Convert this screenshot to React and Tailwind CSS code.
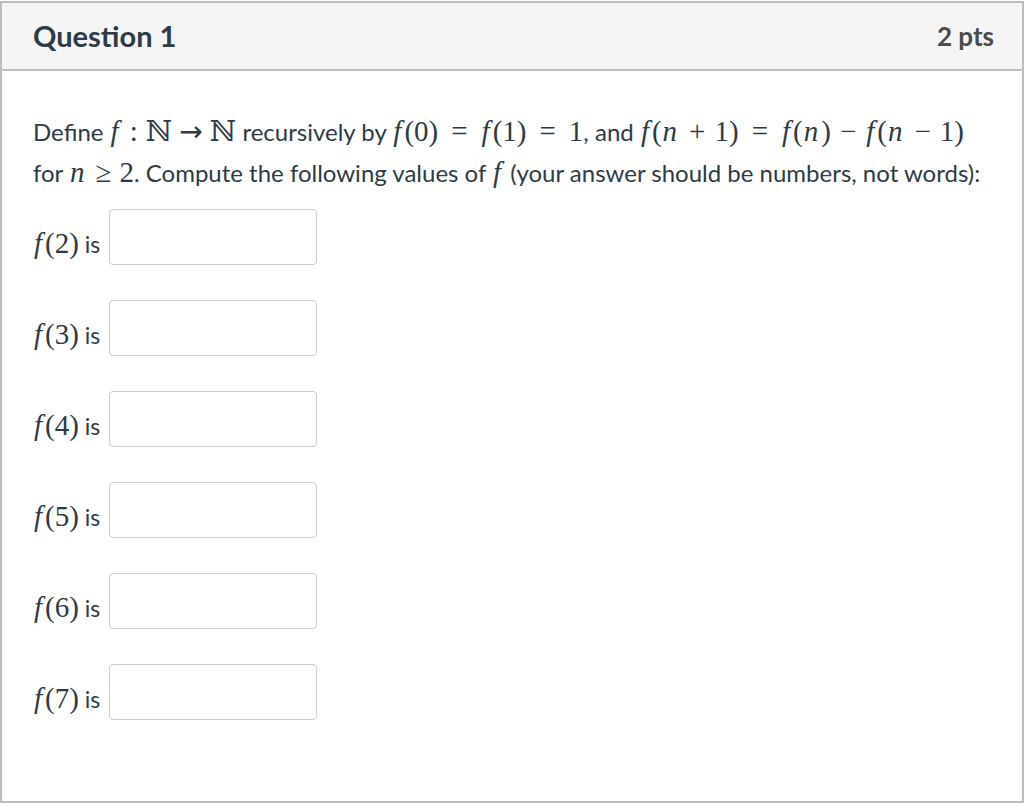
import React from "react";

const M = ({ children, className = "" }) => (
  <span
    className={"text-[29px] " + className}
    style={{ fontFamily: '"Liberation Serif", "DejaVu Serif", serif' }}
  >
    {children}
  </span>
);

// italic math letter, with a little room like KaTeX gives it
const I = ({ children }) => <i className="pl-[1px] pr-[3px]">{children}</i>;

const Rel = ({ children }) => <span className="mx-[13px]">{children}</span>;
const Bin = ({ children }) => <span className="mx-[9px]">{children}</span>;
const Arrow = () => (
  <span
    className="mx-[7px] text-[28px]"
    style={{ fontFamily: '"DejaVu Sans", sans-serif' }}
  >
    →
  </span>
);

const rows = [2, 3, 4, 5, 6, 7];

export default function App() {
  return (
    <div
      className="w-[1024px] h-[808px] bg-white pt-px"
      style={{ fontFamily: "Lato, 'Open Sans', sans-serif" }}
    >
      <div className="w-[1024px] h-[802px] border-2 border-[#bdbdbd] flex flex-col">
        <div className="h-[68px] shrink-0 bg-[#f5f5f5] border-b-2 border-[#bdbdbd] flex items-center justify-between pl-[31px] pr-[28px]">
          <h2 className="text-[29px] font-bold text-[#2d3b45]">Question 1</h2>
          <span className="text-[26px] font-bold text-[#4a4a4a]">2 pts</span>
        </div>

        <div className="pl-[31px] pt-[40px] text-[#2d3b45]">
          <p className="text-[24px] leading-[40px]">
            Define{" "}
            <M>
              <I>f</I>
              <span className="mx-[8px]">:</span>ℕ<Arrow />ℕ
            </M>{" "}
            recursively by{" "}
            <M>
              <I>f</I>(0)<Rel>=</Rel>
              <I>f</I>(1)<Rel>=</Rel>1
            </M>
            , and{" "}
            <M>
              <I>f</I>(<I>n</I>
              <Bin>+</Bin>1)<Rel>=</Rel>
              <I>f</I>(<I>n</I>)<Bin>−</Bin>
              <I>f</I>(<I>n</I>
              <Bin>−</Bin>1)
            </M>
            <br />
            for{" "}
            <M>
              <I>n</I>
              <span className="mx-[8px]">≥</span>2
            </M>
            . Compute the following values of <M><I>f</I></M> (your answer should be numbers, not words):
          </p>

          <div className="mt-[16px] flex flex-col gap-[35px]">
            {rows.map((n) => (
              <div key={n} className="flex items-center">
                <span className="text-[23px] mt-[12px] leading-[26px]">
                  <M>
                    <I>f</I>({n})
                  </M>{" "}
                  is
                </span>
                <input
                  type="text"
                  className="ml-[9px] w-[208px] h-[56px] border border-[#c7cdd1] rounded-[4px] bg-white outline-none px-3"
                />
              </div>
            ))}
          </div>
        </div>
      </div>
    </div>
  );
}
